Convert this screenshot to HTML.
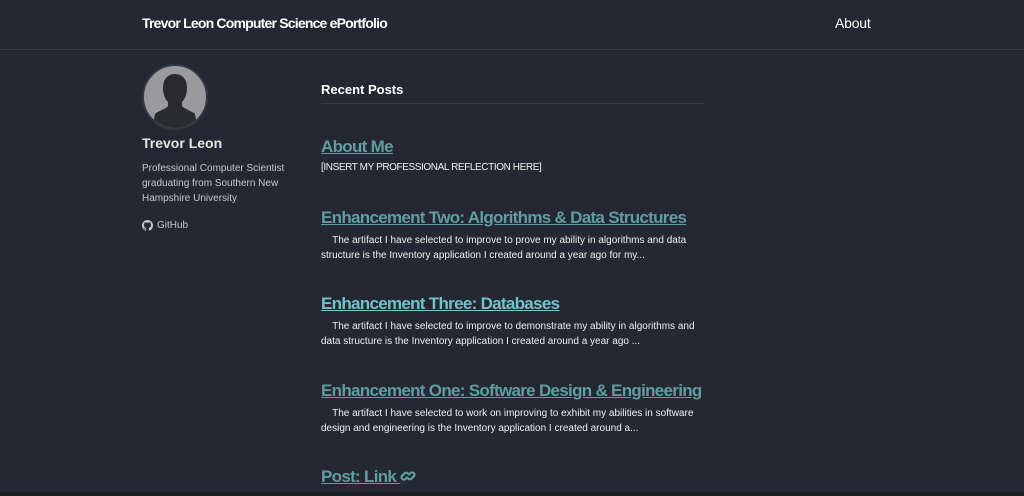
<!DOCTYPE html>
<html><head><meta charset="utf-8"><style>
*{margin:0;padding:0;box-sizing:border-box}
html,body{width:1024px;height:496px;overflow:hidden;background:#252833;font-family:"Liberation Sans",sans-serif;color:#fff}
.hdr{position:absolute;left:0;top:0;width:1024px;height:50px;border-bottom:1px solid #3a3d47}
.title{position:absolute;left:142px;top:15px;font-size:14px;font-weight:bold;letter-spacing:-0.8px;white-space:nowrap}
.about{position:absolute;left:835px;top:15px;font-size:14px;letter-spacing:-0.2px}
.av{position:absolute;left:142px;top:64px;width:66px;height:66px;border-radius:50%;border:2px solid #333744;background:#9a9a9c;overflow:hidden}
.name{position:absolute;left:142px;top:135px;font-size:14px;font-weight:bold;color:#e6e6e6}
.bio{position:absolute;left:142px;top:161px;font-size:10px;line-height:15px;color:#c6c8cc;width:160px}
.gh{position:absolute;left:142px;top:220px;font-size:10px;color:#c6c8cc;display:flex;align-items:center;gap:4px}
.rp{position:absolute;left:321px;top:82px;font-size:13px;font-weight:bold}
.rl{position:absolute;left:321px;top:103px;width:383px;height:1px;background:#3a3d47}
.post{position:absolute;left:321px;width:390px}
.post a{font-size:17px;font-weight:bold;color:#5f9ea0;text-decoration:underline;letter-spacing:-0.7px;white-space:nowrap;display:inline-block;line-height:20px}
.post p{font-size:10px;line-height:15px;color:#f0f0f0;margin-top:5px}
.foot{position:absolute;left:0;top:492px;width:1024px;height:4px;background:#1c1e24}
</style></head><body>
<div class="hdr"><div class="title">Trevor Leon Computer Science ePortfolio</div><div class="about">About</div></div>
<div class="av"><svg width="62" height="62" viewBox="0 0 62 62"><path d="M31 8c-8 0-12 6-12 14 0 6 2 11 5 14v4c-2 3-10 5-13 8l-3 16h46l-3-16c-3-3-11-5-13-8v-4c3-3 5-8 5-14 0-8-4-14-12-14z" fill="#2a2b2f"/></svg></div>
<div class="name">Trevor Leon</div>
<div class="bio">Professional Computer Scientist graduating from Southern New Hampshire University</div>
<div class="gh"><svg width="11" height="11" viewBox="0 0 16 16"><path fill="#c6c8cc" d="M8 0C3.6 0 0 3.6 0 8c0 3.5 2.3 6.5 5.5 7.6.4.1.5-.2.5-.4v-1.4c-2.2.5-2.7-1-2.7-1-.4-.9-.9-1.2-.9-1.2-.7-.5.1-.5.1-.5.8.1 1.2.8 1.2.8.7 1.3 1.9.9 2.3.7.1-.5.3-.9.5-1.1-1.8-.2-3.6-.9-3.6-4 0-.9.3-1.6.8-2.1-.1-.2-.4-1 .1-2.1 0 0 .7-.2 2.2.8.6-.2 1.3-.3 2-.3s1.4.1 2 .3c1.5-1 2.2-.8 2.2-.8.4 1.1.2 1.9.1 2.1.5.6.8 1.3.8 2.1 0 3.1-1.9 3.7-3.6 3.9.3.3.5.8.5 1.5v2.2c0 .2.1.5.6.4C13.7 14.5 16 11.5 16 8c0-4.4-3.6-8-8-8z"/></svg>GitHub</div>
<div class="rp">Recent Posts</div><div class="rl"></div>
<div class="post" style="top:137px"><a>About Me</a><p style="letter-spacing:-0.4px;margin-top:3px">[INSERT MY PROFESSIONAL REFLECTION HERE]</p></div>
<div class="post" style="top:208px"><a>Enhancement Two: Algorithms &amp; Data Structures</a><p>&nbsp;&nbsp;&nbsp;&nbsp;The artifact I have selected to improve to prove my ability in algorithms and data structure is the Inventory application I created around a year ago for my...</p></div>
<div class="post" style="top:294px"><a style="color:#70c4c8">Enhancement Three: Databases</a><p>&nbsp;&nbsp;&nbsp;&nbsp;The artifact I have selected to improve to demonstrate my ability in algorithms and data structure is the Inventory application I created around a year ago ...</p></div>
<div class="post" style="top:381px"><a>Enhancement One: Software Design &amp; Engineering</a><p>&nbsp;&nbsp;&nbsp;&nbsp;The artifact I have selected to work on improving to exhibit my abilities in software design and engineering is the Inventory application I created around a...</p></div>
<div class="post" style="top:467px"><a>Post: Link <svg width="16" height="16" viewBox="0 0 16 16" style="vertical-align:-2px"><g fill="none" stroke="#5f9ea0" stroke-width="2.2" stroke-linecap="round"><path d="M7 9.5l-1.5 1.5a2.3 2.3 0 0 1-3.3-3.3L4.5 5.4a2.3 2.3 0 0 1 3.3 0"/><path d="M9 6.5l1.5-1.5a2.3 2.3 0 0 1 3.3 3.3l-2.3 2.3a2.3 2.3 0 0 1-3.3 0"/></g></svg></a></div>
<div class="foot"></div>
</body></html>
